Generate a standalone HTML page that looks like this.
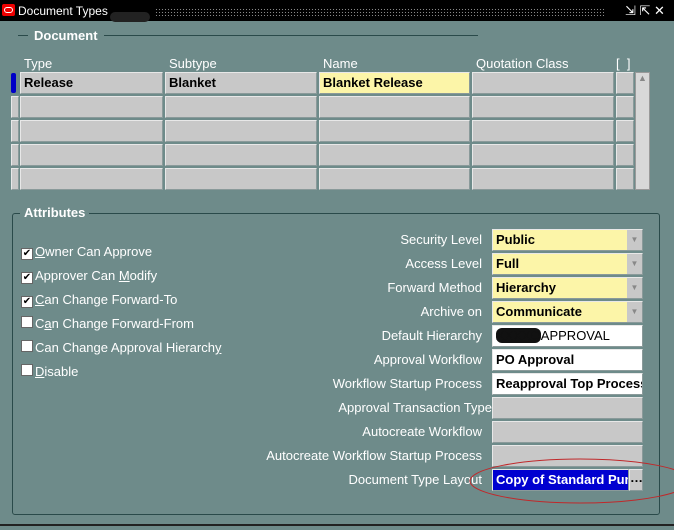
<html><head><style>
body{margin:0;width:674px;height:530px;background:#6e8b8a;position:relative;overflow:hidden;font-family:"Liberation Sans",sans-serif;font-size:13px;color:#fff}
.a{position:absolute}
.tb{left:0;top:0;width:674px;height:21px;background:#000}
.c{position:absolute;background:#c8c8c8;border:1px solid #e8e8e8;border-right-color:#8a9a9a;border-bottom-color:#8a9a9a;box-sizing:border-box;height:22px;color:#000;font-weight:bold;font-size:13px;padding:2px 3px;white-space:nowrap;overflow:hidden}
.y{background:#fcf5a8}.w{background:#fff}
.h{position:absolute;top:56px;font-size:13px;color:#fff}
.lb{position:absolute;font-size:13px;color:#fff;text-align:right;width:300px}
.cb{position:absolute;left:21px;font-size:13px;color:#fff}
.cb i{display:inline-block;width:10px;height:10px;background:#fff;border:1px solid #666;vertical-align:0px;margin-right:2px;font-style:normal;color:#000;font-size:10px;line-height:10px;text-align:center}
.dd{position:absolute;right:0;top:0;width:15px;height:20px;background:#c8c8c8;color:#888;font-size:8px;text-align:center;line-height:20px}
</style></head><body>
<div class="a tb"></div>
<div class="a" style="left:2px;top:4px;width:13px;height:12px;background:#e00;border-radius:2px"><div style="margin:3px 2px;width:9px;height:6px;border:1px solid #fff;border-radius:4px;box-sizing:border-box"></div></div>
<div class="a" style="left:18px;top:4px;color:#fff;font-size:12px">Document Types</div>
<div class="a" style="left:155px;top:8px;width:450px;height:8px;background-image:radial-gradient(#888 0.6px,transparent 0.8px);background-size:3px 3px"></div>
<div class="a" style="left:110px;top:12px;width:40px;height:10px;background:#222;border-radius:5px"></div>
<div class="a" style="left:625px;top:3px;color:#fff;font-size:13px">⇲ ⇱ ✕</div>
<div class="a" style="left:18px;top:35px;width:460px;height:0;border-top:1px solid #2a4a4a"></div>
<div class="a" style="left:28px;top:28px;background:#6e8b8a;padding:0 6px;font-weight:bold">Document</div>
<div class="h" style="left:24px">Type</div><div class="h" style="left:169px">Subtype</div><div class="h" style="left:323px">Name</div><div class="h" style="left:476px">Quotation Class</div><div class="h" style="left:616px">[ &nbsp;]</div>
<div class="a" style="left:11px;top:73px;width:5px;height:20px;background:#0000c8;border-radius:2px"></div>
<div class="c" style="left:20px;top:72px;width:143px">Release</div>
<div class="c" style="left:165px;top:72px;width:152px">Blanket</div>
<div class="c y" style="left:319px;top:72px;width:151px">Blanket Release</div>
<div class="c" style="left:472px;top:72px;width:142px"></div>
<div class="c" style="left:616px;top:72px;width:18px"></div>
<div id="rows"></div>
<div class="a" style="left:635px;top:72px;width:15px;height:118px;background:#d8d8d8;border:1px solid #999;box-sizing:border-box;color:#888;font-size:9px;text-align:center">▲</div>
<div class="a" style="left:12px;top:213px;width:648px;height:302px;border:1px solid #2a4a4a;border-radius:3px;box-sizing:border-box"></div>
<div class="a" style="left:20px;top:205px;background:#6e8b8a;padding:0 4px;font-weight:bold">Attributes</div>
<div class="cb" style="top:244px"><i>✔</i><u>O</u>wner Can Approve</div>
<div class="cb" style="top:268px"><i>✔</i>Approver Can <u>M</u>odify</div>
<div class="cb" style="top:292px"><i>✔</i><u>C</u>an Change Forward-To</div>
<div class="cb" style="top:316px"><i></i>C<u>a</u>n Change Forward-From</div>
<div class="cb" style="top:340px"><i></i>Can Change Approval Hierarch<u>y</u></div>
<div class="cb" style="top:364px"><i></i><u>D</u>isable</div>
<div id="f"></div>
<svg class="a" style="left:465px;top:455px" width="209" height="52"><ellipse cx="115" cy="26" rx="110" ry="22" fill="none" stroke="#c0282a" stroke-width="1"/></svg>
<div class="a" style="left:0;top:524px;width:674px;height:2px;background:#222"></div>
<script>
var r='';for(var i=1;i<5;i++){var t=72+i*24;r+='<div class="c" style="left:11px;top:'+t+'px;width:8px"></div><div class="c" style="left:20px;top:'+t+'px;width:143px"></div><div class="c" style="left:165px;top:'+t+'px;width:152px"></div><div class="c" style="left:319px;top:'+t+'px;width:151px"></div><div class="c" style="left:472px;top:'+t+'px;width:142px"></div><div class="c" style="left:616px;top:'+t+'px;width:18px"></div>';}
document.getElementById('rows').innerHTML=r;
var L=[['Security Level','Public','y',1],['Access Level','Full','y',1],['Forward Method','Hierarchy','y',1],['Archive on','Communicate','y',1],['Default Hierarchy','<span style="background:#111;border-radius:6px;color:#111">XXXXO</span>APPROVAL','w',0],['Approval Workflow','PO Approval','w',0],['Workflow Startup Process','Reapproval Top Process','w',0],['Approval Transaction Type','','',0],['Autocreate Workflow','','',0],['Autocreate Workflow Startup Process','','',0],['Document Type Layout','L','',2]];
var f='';L.forEach(function(l,i){var t=229+i*24;
f+='<div class="lb" style="top:'+(t+3)+'px;left:'+(482-300+(i==7?10:0))+'px">'+l[0]+'</div>';
if(l[3]==2){f+='<div class="c" style="left:492px;top:'+t+'px;width:137px;background:#0000d0;color:#fff">Copy of Standard Purchase</div><div class="c" style="left:629px;top:'+t+'px;width:14px;padding:0;text-align:center">…</div>';}
else f+='<div class="c '+l[2]+'" style="left:492px;top:'+t+'px;width:151px;font-weight:'+(l[2]=='w'&&i==4?'normal':'bold')+'">'+l[1]+(l[3]?'<div class="dd">▼</div>':'')+'</div>';});
document.getElementById('f').innerHTML=f;
</script>
</body></html>
